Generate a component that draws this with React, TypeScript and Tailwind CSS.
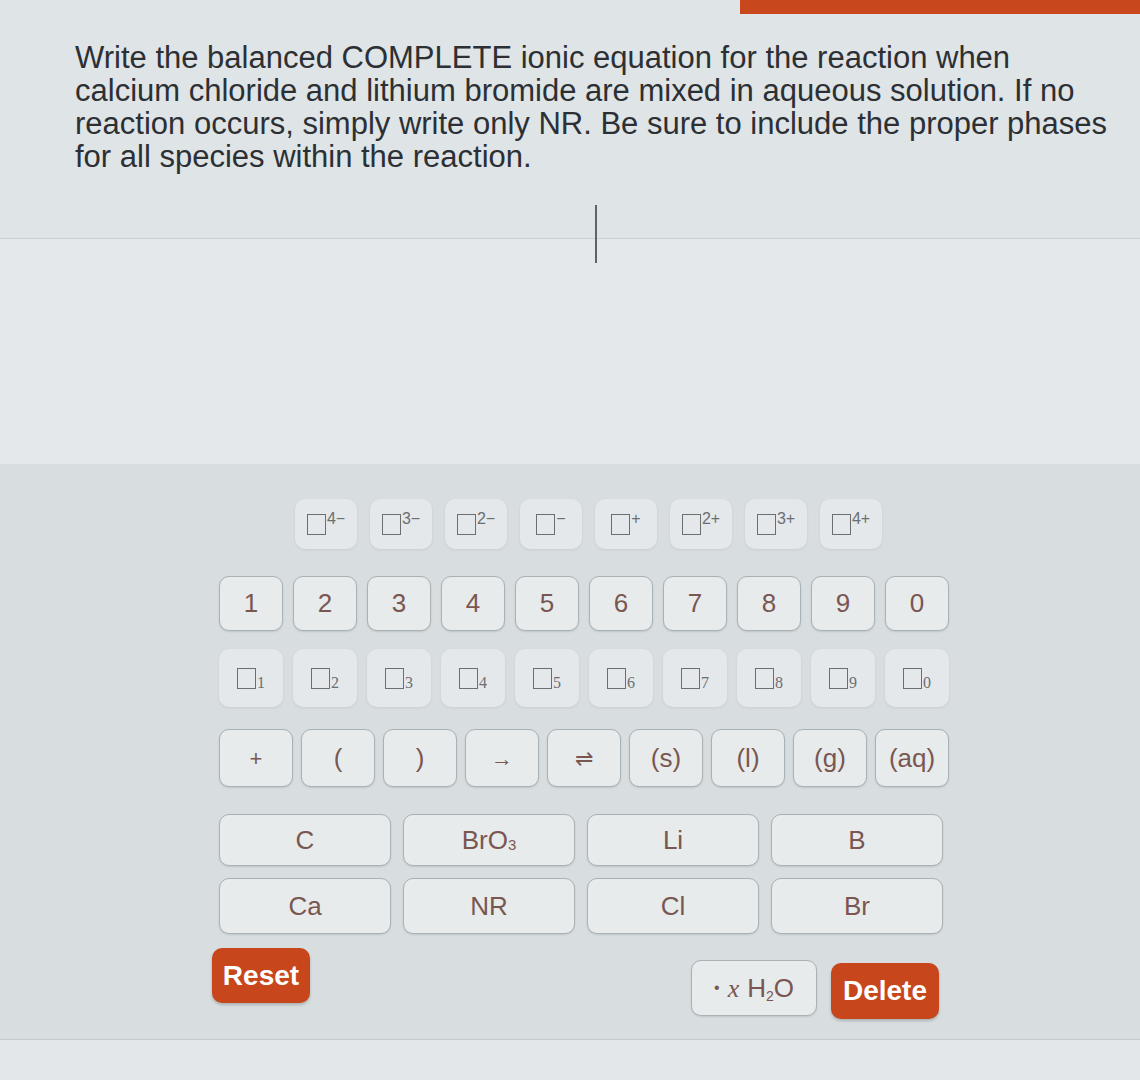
import type { ReactNode } from 'react';

const charges = ['4−', '3−', '2−', '−', '+', '2+', '3+', '4+'];
const digits = ['1', '2', '3', '4', '5', '6', '7', '8', '9', '0'];
const subs = ['1', '2', '3', '4', '5', '6', '7', '8', '9', '0'];
const symbols: ReactNode[] = ['+', '(', ')', '→', '⇌', '(s)', '(l)', '(g)', '(aq)'];
const elementsTop: ReactNode[] = [
  'C',
  <>
    BrO<span className="text-[15px] relative top-[5px]">3</span>
  </>,
  'Li',
  'B',
];
const elementsBottom = ['Ca', 'NR', 'Cl', 'Br'];

function Box() {
  return <span className="inline-block w-[19px] h-[21px] border-[1.5px] border-[#6b6f72]" />;
}

function Key({ children, className = '' }: { children: ReactNode; className?: string }) {
  return (
    <button
      className={
        'flex items-center justify-center rounded-[10px] border-[1.5px] border-[#a9b2b6] bg-[#e7ebec] text-[#7a5651] shadow-[0_1px_2px_rgba(0,0,0,0.12)] ' +
        className
      }
    >
      {children}
    </button>
  );
}

function SoftKey({ children }: { children: ReactNode }) {
  return (
    <button className="flex items-center justify-center rounded-[10px] bg-[#e4e8ea] shadow-[0_1px_3px_rgba(0,0,0,0.08)]">
      {children}
    </button>
  );
}

export default function App() {
  return (
    <div
      className="w-[1140px] h-[1080px] overflow-hidden bg-[#dfe4e6] flex flex-col"
      style={{ fontFamily: '"Liberation Sans", Arial, sans-serif' }}
    >
      <div className="flex justify-end">
        <div className="h-[14px] w-[400px] bg-[#c8471d]" />
      </div>

      <div className="pt-[27px] pl-[75px] pr-[10px] text-[31px] leading-[33px] text-[#2c3034] whitespace-nowrap">
        Write the balanced COMPLETE ionic equation for the reaction when
        <br />
        calcium chloride and lithium bromide are mixed in aqueous solution. If no
        <br />
        reaction occurs, simply write only NR. Be sure to include the proper phases
        <br />
        for all species within the reaction.
      </div>

      {/* answer input */}
      <div className="relative mt-[32px] h-[34px] border-b border-[#c9d0d3]">
        <div className="absolute left-[595px] top-[0px] h-[58px] w-[2px] bg-[#5d6468]" />
      </div>
      <div className="h-[225px] bg-[#e5e8ea]" />

      {/* keypad */}
      <div className="flex-1 bg-[#d8dee0] pt-[35px] border-b border-[#c3cacd]">
        <div className="ml-[219px] w-[732px] flex flex-col">
          <div className="pl-[76px] grid grid-cols-[repeat(8,62px)] gap-x-[13px] h-[50px]">
            {charges.map((c) => (
              <SoftKey key={c}>
                <span className="flex items-start">
                  <Box />
                  <span className="text-[16px] leading-[16px] text-[#6b6f72] -mt-[3px] ml-[1px]">{c}</span>
                </span>
              </SoftKey>
            ))}
          </div>

          <div className="mt-[27px] grid grid-cols-[repeat(10,64px)] gap-x-[10px] h-[55px] text-[26px]">
            {digits.map((d) => (
              <Key key={d}>{d}</Key>
            ))}
          </div>

          <div className="mt-[18px] grid grid-cols-[repeat(10,64px)] gap-x-[10px] h-[58px]">
            {subs.map((s) => (
              <SoftKey key={s}>
                <span className="flex items-end">
                  <Box />
                  <span
                    className="text-[16px] leading-[16px] text-[#6b6f72] ml-[1px] -mb-[2px]"
                    style={{ fontFamily: '"Liberation Serif", serif' }}
                  >
                    {s}
                  </span>
                </span>
              </SoftKey>
            ))}
          </div>

          <div className="mt-[22px] grid grid-cols-[repeat(9,74px)] gap-x-[8px] h-[58px] text-[26px]">
            {symbols.map((s, i) => (
              <Key key={i} className={i === 0 || i === 3 || i === 4 ? 'text-[22px]' : ''}>
                {s}
              </Key>
            ))}
          </div>

          <div className="mt-[27px] grid grid-cols-[repeat(4,172px)] gap-x-[12px] h-[52px] text-[26px]">
            {elementsTop.map((e, i) => (
              <Key key={i}>{e}</Key>
            ))}
          </div>

          <div className="mt-[12px] grid grid-cols-[repeat(4,172px)] gap-x-[12px] h-[56px] text-[26px]">
            {elementsBottom.map((e) => (
              <Key key={e}>{e}</Key>
            ))}
          </div>

          <div className="mt-[14px] flex items-start -ml-[7px] mr-[12px]">
            <button className="h-[55px] w-[98px] rounded-[10px] bg-[#c7461c] text-white text-[28px] font-bold shadow-[0_2px_3px_rgba(0,0,0,0.2)]">
              Reset
            </button>
            <div className="flex-1" />
            <Key className="mt-[12px] h-[56px] w-[126px] text-[26px] gap-[8px]">
              <span className="text-[16px]">•</span>
              <span className="italic" style={{ fontFamily: '"Liberation Serif", serif' }}>
                x
              </span>
              <span>
                H<span className="text-[14px] relative top-[4px]">2</span>O
              </span>
            </Key>
            <button className="ml-[14px] mt-[15px] h-[56px] w-[108px] rounded-[10px] bg-[#c7461c] text-white text-[28px] font-bold shadow-[0_2px_3px_rgba(0,0,0,0.2)]">
              Delete
            </button>
          </div>
        </div>
      </div>
      <div className="h-[40px] bg-[#e3e7e9]" />
    </div>
  );
}
